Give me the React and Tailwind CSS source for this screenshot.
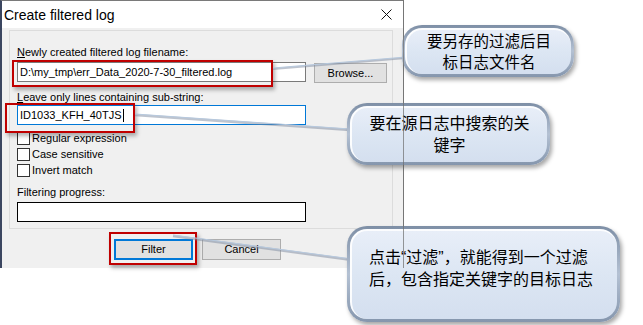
import React from "react";

const ui = { fontFamily: '"Liberation Sans", Arial, sans-serif' };
const cjk = { fontFamily: '"Noto Sans CJK SC", "Noto Sans", sans-serif' };

function Check({ label }) {
  return (
    <div className="flex items-center h-[16px]">
      <div className="w-[13px] h-[13px] border border-[#333] bg-white shrink-0" />
      <span className="ml-[2px] text-[11px] leading-[13px] text-black">{label}</span>
    </div>
  );
}

function Bubble({ className, children }) {
  return (
    <div
      className={
        "absolute rounded-[20px] p-[3px] bg-gradient-to-b from-[#7e8fa6] via-[#b4c1d3] to-[#8596ad] shadow-[2px_3px_4px_rgba(0,0,0,0.35)] " +
        className
      }
    >
      <div className="w-full h-full rounded-[17px] border-t-2 border-l-2 border-white/90 bg-gradient-to-b from-[#e8eef8] via-[#dce6f3] to-[#d4dfef] flex">
        {children}
      </div>
    </div>
  );
}

export default function App() {
  return (
    <div className="relative w-[643px] h-[325px] bg-white overflow-hidden" style={ui}>
      {/* Dialog */}
      <div className="w-[404px] h-[268px] flex flex-col border-l-2 border-l-[#3b4660] border-t border-t-[#7a7a7a] border-r border-r-[#8c8c8c] bg-[#f0f0f0]">
        <div className="h-[27px] bg-white flex items-center justify-between pl-[2px] pr-[11px]">
          <span className="text-[14px] leading-[16px] text-black">Create filtered log</span>
          <svg width="11" height="11" viewBox="0 0 11 11">
            <path d="M0.5 0.5 L10.5 10.5 M10.5 0.5 L0.5 10.5" stroke="#111" strokeWidth="1" />
          </svg>
        </div>
        <div className="flex-1 pl-[7px] pr-[10px] pt-[2px]">
          <div className="h-[199px] border border-[#dcdcdc] pl-[7px] pt-[15px]">
            <div className="text-[11px] leading-[13px] text-black">
              <span className="underline">N</span>ewly created filtered log filename:
            </div>
            <div className="flex items-start mt-[3px]">
              <div className="w-[289px] h-[20px] border border-[#7a7a7a] bg-white flex items-center pl-[2px] text-[11px] text-black">
                D:\my_tmp\err_Data_2020-7-30_filtered.log
              </div>
              <div className="ml-[8px] w-[73px] h-[20px] mt-[1px] border border-[#adadad] bg-[#e1e1e1] flex items-center justify-center text-[11px] text-black">
                Browse...
              </div>
            </div>
            <div className="mt-[8px] text-[11px] leading-[13px] text-black">
              <span className="underline">L</span>eave only lines containing sub-string:
            </div>
            <div className="mt-[1px] w-[289px] h-[20px] border border-[#0078d7] bg-white flex items-center pl-[2px] text-[11px] text-black">
              ID1033_KFH_40TJS
              <span className="inline-block w-px h-[13px] bg-black ml-[1px]" />
            </div>
            <div className="mt-[5px] flex flex-col">
              <Check label="Regular expression" />
              <Check label="Case sensitive" />
              <Check label="Invert match" />
            </div>
            <div className="mt-[8px] text-[11px] leading-[13px] text-black">Filtering progress:</div>
            <div className="mt-[3px] w-[289px] h-[20px] border border-black bg-white" />
          </div>
          <div className="mt-[10px] flex pl-[105px] gap-[9px]">
            <div className="w-[79px] h-[21px] border-2 border-[#0078d7] bg-[#e1e1e1] flex items-center justify-center text-[11px] text-black">
              Filter
            </div>
            <div className="w-[79px] h-[21px] border border-[#adadad] bg-[#e1e1e1] flex items-center justify-center text-[11px] text-black">
              Cancel
            </div>
          </div>
        </div>
      </div>

      {/* Red highlight boxes */}
      <div className="absolute left-[12px] top-[60px] w-[261px] h-[27px] border-2 border-[#c00000] shadow-[2px_3px_4px_rgba(0,0,0,0.3)]" />
      <div className="absolute left-[5px] top-[103px] w-[130px] h-[30px] border-2 border-[#c00000] shadow-[2px_3px_4px_rgba(0,0,0,0.3)]" />
      <div className="absolute left-[109px] top-[232px] w-[88px] h-[33px] border-2 border-[#c00000] shadow-[2px_3px_4px_rgba(0,0,0,0.3)]" />

      {/* Connectors */}
      <svg className="absolute left-0 top-0" width="643" height="325">
        <line x1="273" y1="69" x2="406" y2="58" stroke="#7d8aa0" strokeWidth="2" opacity="0.5" />
        <line x1="273" y1="68" x2="406" y2="57" stroke="#b7c9de" strokeWidth="1" />
        <line x1="135" y1="115" x2="350" y2="130" stroke="#7d8aa0" strokeWidth="2.5" opacity="0.5" />
        <line x1="135" y1="114" x2="350" y2="129" stroke="#b7c9de" strokeWidth="1" />
        <line x1="173" y1="236" x2="352" y2="260" stroke="#7d8aa0" strokeWidth="2.5" opacity="0.5" />
        <line x1="173" y1="235" x2="352" y2="259" stroke="#b7c9de" strokeWidth="1" />
      </svg>

      {/* Callouts */}
      <Bubble className="left-[402px] top-[25px] w-[172px] h-[52px]">
        <div className="w-full flex flex-col items-center justify-center pb-[3px] text-[15.5px] leading-[21px] text-black whitespace-nowrap" style={cjk}>
          <span>要另存的过滤后目</span>
          <span>标日志文件名</span>
        </div>
      </Bubble>
      <Bubble className="left-[347px] top-[103px] w-[203px] h-[62px]">
        <div className="w-full flex flex-col items-center justify-center pb-[5px] text-[16px] leading-[22px] text-black whitespace-nowrap" style={cjk}>
          <span>要在源日志中搜索的关</span>
          <span>键字</span>
        </div>
      </Bubble>
      <Bubble className="left-[347px] top-[226px] w-[273px] h-[96px]">
        <div className="w-full flex flex-col justify-center pl-[17px] pb-[16px] text-[16px] leading-[21px] text-black whitespace-nowrap" style={cjk}>
          <span>
            点击<span style={ui}>“</span>过滤<span style={ui}>”</span>，就能得到一个过滤
          </span>
          <span>后，包含指定关键字的目标日志</span>
        </div>
      </Bubble>

      {/* Window edge line over callouts */}
      <svg className="absolute left-0 top-0 pointer-events-none" width="643" height="325">
        <line x1="403.5" y1="0" x2="403.5" y2="268" stroke="#6e6e6e" strokeWidth="1" opacity="0.7" />
      </svg>
    </div>
  );
}
